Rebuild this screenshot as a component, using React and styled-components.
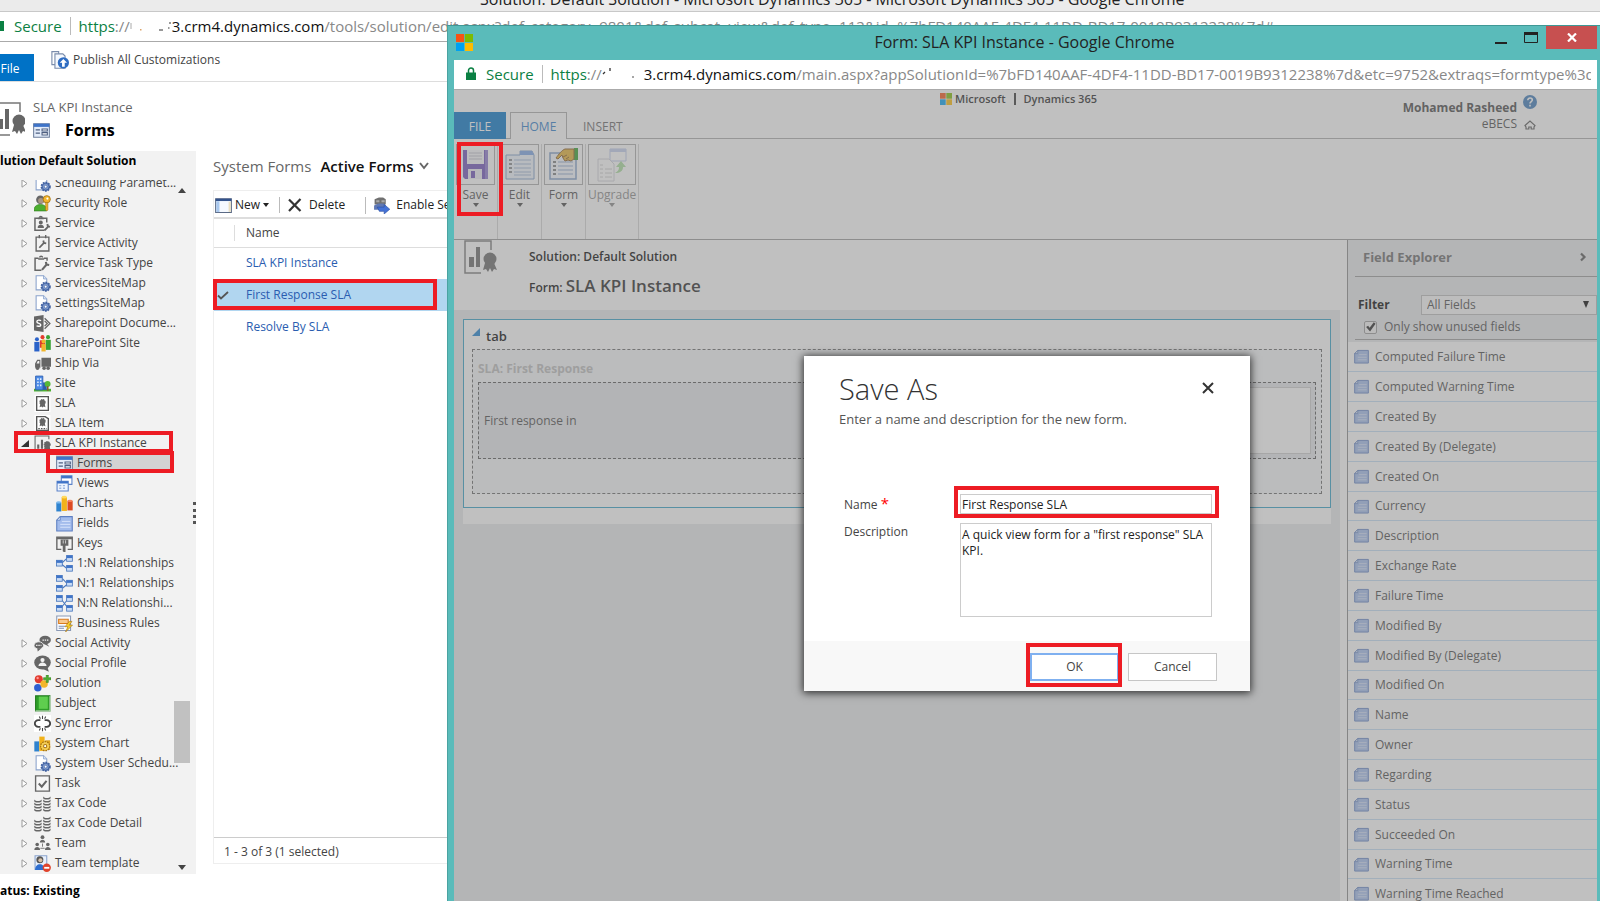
import React, { useState } from "react";
import styled, { createGlobalStyle, css } from "styled-components";

const TREE = [
  { label: "Scheduling Paramet...", icon: "sitemap" },
  { label: "Security Role", icon: "role" },
  { label: "Service", icon: "service" },
  { label: "Service Activity", icon: "activity" },
  { label: "Service Task Type", icon: "taskType" },
  { label: "ServicesSiteMap", icon: "sitemap" },
  { label: "SettingsSiteMap", icon: "sitemap" },
  { label: "Sharepoint Docume...", icon: "sharepoint" },
  { label: "SharePoint Site", icon: "people" },
  { label: "Ship Via", icon: "ship" },
  { label: "Site", icon: "site" },
  { label: "SLA", icon: "sla" },
  { label: "SLA Item", icon: "slaItem" },
  { label: "SLA KPI Instance", icon: "kpi", open: true, marked: true },
  { label: "Forms", icon: "form", child: true, selected: true, marked: true },
  { label: "Views", icon: "views", child: true },
  { label: "Charts", icon: "charts", child: true },
  { label: "Fields", icon: "field", child: true },
  { label: "Keys", icon: "keys", child: true },
  { label: "1:N Relationships", icon: "oneToN", child: true },
  { label: "N:1 Relationships", icon: "nToOne", child: true },
  { label: "N:N Relationshi...", icon: "nToN", child: true },
  { label: "Business Rules", icon: "rules", child: true },
  { label: "Social Activity", icon: "social" },
  { label: "Social Profile", icon: "profile" },
  { label: "Solution", icon: "solution" },
  { label: "Subject", icon: "subject" },
  { label: "Sync Error", icon: "sync" },
  { label: "System Chart", icon: "sysChart" },
  { label: "System User Schedu...", icon: "sitemap" },
  { label: "Task", icon: "task" },
  { label: "Tax Code", icon: "tax" },
  { label: "Tax Code Detail", icon: "tax" },
  { label: "Team", icon: "team" },
  { label: "Team template", icon: "template" },
];

const FIELDS = [
  "Computed Failure Time",
  "Computed Warning Time",
  "Created By",
  "Created By (Delegate)",
  "Created On",
  "Currency",
  "Description",
  "Exchange Rate",
  "Failure Time",
  "Modified By",
  "Modified By (Delegate)",
  "Modified On",
  "Name",
  "Owner",
  "Regarding",
  "Status",
  "Succeeded On",
  "Warning Time",
  "Warning Time Reached",
];

const FORMS = ["SLA KPI Instance", "First Response SLA", "Resolve By SLA"];

const g = "#666";

const gear = (
  <g>
    <circle cx="11" cy="11" r="4" fill="#6d8cc4" stroke="#3f5f9e" strokeWidth="1.6" strokeDasharray="1.6 1" />
    <circle cx="11" cy="11" r="3.2" fill="#7f9ccf" stroke="#3f5f9e" strokeWidth=".8" />
    <circle cx="11" cy="11" r="1.3" fill="#fff" stroke="#3f5f9e" strokeWidth=".6" />
  </g>
);

const node = (x, y) => (
  <g key={`${x}-${y}`}>
    <rect x={x} y={y} width="5.4" height="5.4" fill="#c9dcf6" stroke="#4a78bd" strokeWidth=".8" />
    <rect x={x} y={y} width="5.4" height="2.4" fill="#3f74c8" />
  </g>
);

const coins = (x, y, n) =>
  Array.from({ length: n }, (_, i) => (
    <path key={`${x}-${i}`} d={`M${x} ${y + i * 2.8}c0 2.2 7 2.2 7 0v1.6c0 2-7 2-7 0z`} fill={g} />
  ));

const ribbonBadge = (x, y, r) => (
  <g fill={g}>
    <circle cx={x} cy={y} r={r} />
    <circle cx={x} cy={y} r={r} fill="none" stroke={g} strokeWidth="1" strokeDasharray="1.2 .8" />
    <path d={`M${x - r * 0.8} ${y + r * 0.4}l${-r * 0.3} ${r * 1.5}l${r * 0.7} ${-r * 0.3}l${r * 0.4} ${r * 0.4}l${r * 0.4} ${-r * 0.4}l${r * 0.7} ${r * 0.3}l${-r * 0.3} ${-r * 1.5}z`} />
  </g>
);

const glyphs = {
  sitemap: (
    <>
      <path d="M2 .7h7l3 3V14H2z" fill="#fff" stroke="#8aa3cc" />
      <path d="M9 .7v3h3" fill="#dce7f7" stroke="#8aa3cc" strokeWidth=".8" />
      {gear}
    </>
  ),
  role: (
    <>
      <circle cx="6" cy="4.5" r="4" fill="#666" />
      <circle cx="6.5" cy="5.5" r="2.6" fill="#a89684" />
      <path d="M0 15c0-4 2-6 6-6s6 2 6 6z" fill="#4caf2f" stroke="#2f7d1c" strokeWidth=".6" />
      <circle cx="12" cy="4" r="3.4" fill="#f2b62c" stroke="#a87412" strokeWidth=".8" />
      <circle cx="12.6" cy="3.4" r="1" fill="#fff" />
      <path d="M11 7h2v7l-1 1-1-1z" fill="#f2b62c" stroke="#a87412" strokeWidth=".6" />
    </>
  ),
  service: (
    <g fill="none" stroke={g} strokeWidth="1.4">
      <path d="M10 14.300H.9V3H12v4" />
      <path d="M3.6 3.400h5.600M5 2.400a1.500 1.500 0 0 1 2.800 0" />
      <circle cx="6.400" cy="7" r="1.200" fill={g} />
      <path d="M4.200 11.500c0-2.200 4.400-2.200 4.400 0z" fill={g} />
      <path d="M10 14.500l3.300-3.600M12.600 8.500l.4 2 2 .6" strokeWidth="1.800" />
    </g>
  ),
  activity: (
    <g fill="none" stroke={g} strokeWidth="1.300">
      <path d="M2 2h12v13H2zM5 0v3M11 0v3" />
      <path d="M5 12l4.600-4.800M8.800 5.200l.4 2.300 2.300.4" strokeWidth="1.700" />
    </g>
  ),
  taskType: (
    <g fill="none" stroke={g} strokeWidth="1.400">
      <path d="M7 14.300H1V3h3.200M9.300 3h3v2.500M4 3.700h5.600M5.200 2.300a1.600 1.600 0 0 1 3 0" />
      <path d="M7.500 14l4.400-5M11.200 6.500l.5 2.500 2.600.4" strokeWidth="2" />
    </g>
  ),
  sharepoint: (
    <>
      <path d="M0 1.500L9 0v16L0 14.500z" fill={g} />
      <path d="M6.600 5.400c-1-1-3.900-.8-3.900.9 0 2 3.700 1.300 3.700 3 0 1.500-2.700 1.700-4 .8" fill="none" stroke="#fff" strokeWidth="1.300" />
      <path d="M10 3l5 5-5 5M10 5.500L12.500 8 10 10.500" fill="none" stroke={g} strokeWidth="1.200" />
    </>
  ),
  people: (
    <>
      <circle cx="8" cy="2" r="1.900" fill="#e23b2e" />
      <path d="M5.500 5h5v7h-5z" fill="#e23b2e" />
      <circle cx="13.200" cy="2" r="1.900" fill="#3aa335" />
      <path d="M11 4.500h4.800V14H11z" fill="#3aa335" />
      <circle cx="2.800" cy="4" r="1.900" fill="#2a62c9" />
      <path d="M.3 6.500h4.800V15.500H.3z" fill="#2a62c9" />
      <circle cx="9" cy="6" r="1.900" fill="#f2b62c" />
      <path d="M7 8.500h4V15.500H7z" fill="#f2b62c" />
    </>
  ),
  ship: (
    <g fill={g}>
      <path d="M7 2.500h9V11H7zM6 4.500H3L1 8v4h5z" />
      <path d="M3.600 5.600H5V8H2.400z" fill="#f2f2f2" />
      <circle cx="3.300" cy="12.400" r="1.700" />
      <circle cx="9.500" cy="12.400" r="1.700" />
      <circle cx="13.300" cy="12.400" r="1.700" />
    </g>
  ),
  site: (
    <>
      <path d="M0 13h16v2.500H0z" fill="#4caf2f" />
      <path d="M1.500 1h6.800v13H1.500z" fill="#4d8be6" stroke="#2a5db0" strokeWidth=".8" />
      <path d="M3 3h1.400v1.600H3zm2.600 0H7v1.600H5.600zM3 6h1.400v1.600H3zm2.600 0H7v1.600H5.600zM3 9h1.400v1.600H3zm2.600 0H7v1.600H5.600z" fill="#e4f0ff" />
      <path d="M8.500 7H12v7H8.500z" fill="#2a5db0" />
      <circle cx="12.800" cy="8.500" r="2.800" fill="#57b838" />
      <path d="M12.200 10.500h1.500V15h-1.500z" fill="#8a5a2b" />
    </>
  ),
  sla: (
    <>
      <path d="M.5 0h15v16H.5z" fill="#fff" />
      <path d="M2.500 1.500h11v13h-11z" fill="#fff" stroke="#555" strokeWidth="1.300" />
      {ribbonBadge(8, 6.800, 2.500)}
    </>
  ),
  slaItem: (
    <>
      <path d="M.5 0h15v16H.5z" fill="#fff" />
      <path d="M2.500 1.500h8l3 2v11h-11z" fill="#fff" stroke="#555" strokeWidth="1.300" />
      {ribbonBadge(8, 5.800, 2.500)}
      <path d="M4 12.800h8" stroke="#555" strokeDasharray="1.500 1" />
    </>
  ),
  kpi: (
    <>
      <path d="M14 4V1H1v14h8" fill="none" stroke={g} />
      <path d="M3 9h2v4H3zM6.500 4.500h2V13h-2z" fill={g} />
      {ribbonBadge(12.400, 9, 2.800)}
    </>
  ),
  form: (
    <>
      <path d="M.6 1.600h14.800v12.800H.6z" fill="#e3ecfa" stroke="#6f7f9c" />
      <path d="M.6 1.600h14.800v3H.6z" fill="#3f74c8" />
      <path d="M2.500 7.500h4M2.500 10.500h4" stroke="#4d5e80" strokeWidth="1.200" />
      <path d="M8.500 6.500h5v2h-5zM8.500 10h5v2.200h-5z" fill="#fff" stroke="#4d5e80" />
    </>
  ),
  views: (
    <>
      <path d="M5 .8h10v8H5z" fill="#fff" stroke="#5a82c9" />
      <path d="M5 .8h10v2.400H5z" fill="#3f74c8" />
      <path d="M1 5.800h10.500V15H1z" fill="#eff5fe" stroke="#5a82c9" />
      <path d="M1 5.800h10.500v2.200H1z" fill="#3f74c8" />
      <path d="M3 10h2M6.500 10h2M3 12.500h2M6.500 12.500h2" stroke="#9db7e0" strokeWidth="1.300" />
    </>
  ),
  charts: (
    <>
      <path d="M.3 7h4.700v8.500H.3z" fill="#2f83cf" />
      <ellipse cx="2.600" cy="7" rx="2.300" ry="1.100" fill="#7bb8ee" />
      <path d="M5.300 2h5v13h-5z" fill="#f2b21a" />
      <ellipse cx="7.800" cy="2" rx="2.500" ry="1.200" fill="#ffd95e" />
      <path d="M10.800 5.500h4.900V14.500h-4.900z" fill="#dd4a22" />
      <ellipse cx="13.200" cy="5.500" rx="2.400" ry="1.100" fill="#f5835e" />
    </>
  ),
  field: (
    <>
      <path d="M4 1.500h11.300V15H.7V4.900z" fill="#a3bcec" stroke="#5d7fc2" />
      <path d="M.7 4.900L4 1.500v3.400z" fill="#e4edfc" stroke="#5d7fc2" strokeWidth=".8" />
      <path d="M5.500 6h8M4 8.800h9.500M4 11.500h9.500" stroke="#d9e5fb" strokeWidth=".9" />
    </>
  ),
  keys: (
    <g fill="none" stroke={g} strokeWidth="1.300">
      <path d="M5 13.500H.8V2h14.500v11.500H11" />
      <path d="M.8 3h14.500" strokeWidth="2" />
      <path d="M5 5h6v4.500H5zM7 9.500V15l1.300.8V9.500" fill={g} />
      <path d="M6.800 5v3M9 5v3" stroke="#ddd" strokeWidth=".8" />
    </g>
  ),
  oneToN: (
    <>
      <path d="M5 8l5-4.500M5 8.500l5 4" stroke="#4a78bd" fill="none" />
      {node(0.500, 5)}
      {node(10, 0.500)}
      {node(10, 9.800)}
    </>
  ),
  nToOne: (
    <>
      <path d="M6 3.500l5 5M6 12.500l5-4" stroke="#4a78bd" fill="none" />
      {node(0.500, 0.500)}
      {node(0.500, 9.800)}
      {node(10, 5)}
    </>
  ),
  nToN: (
    <>
      <path d="M5 4l6 8M11 4l-6 8" stroke="#4a78bd" fill="none" />
      {node(0.500, 0.500)}
      {node(10, 0.500)}
      {node(0.500, 9.800)}
      {node(10, 9.800)}
    </>
  ),
  rules: (
    <>
      <path d="M.7 1h13v13.500H.7z" fill="#fafcff" stroke="#8a99b5" />
      <path d="M2.500 4h9v4h-9z" fill="#f7c98f" stroke="#d97a1c" />
      <path d="M2.500 10.500h6M2.500 12.500h5" stroke="#7f8fb0" />
      <path d="M12.500 6l-4 5h2.700L9 16l6.500-6.500h-3L15 6z" fill="#f7cf2c" stroke="#a87412" strokeWidth=".6" />
    </>
  ),
  social: (
    <g fill={g}>
      <ellipse cx="10.500" cy="4.800" rx="5.400" ry="4" />
      <path d="M12 8l2.500 3-5-2.500z" />
      <ellipse cx="4.500" cy="9.800" rx="4.500" ry="3.400" stroke="#f2f2f2" strokeWidth=".8" />
      <path d="M3 12.500l.5 3 3.500-3z" />
      <path d="M8 4.800h5.500M2 9.800h5" stroke="#f2f2f2" strokeWidth="1.300" strokeDasharray="1.300 .8" />
    </g>
  ),
  profile: (
    <g fill={g}>
      <ellipse cx="8" cy="7" rx="7.800" ry="6.600" />
      <path d="M8 13l6 2.800-1.500-5z" />
      <circle cx="8" cy="4.800" r="2" fill="#f2f2f2" />
      <path d="M4.200 10.400c0-4.400 7.600-4.400 7.600 0z" fill="#f2f2f2" />
    </g>
  ),
  solution: (
    <>
      <circle cx="4.500" cy="4" r="3.800" fill="#e23b2e" />
      <circle cx="3.600" cy="12" r="3.500" fill="#2f5fd0" />
      <circle cx="9.500" cy="8.500" r="3.500" fill="#f2b62c" />
      <circle cx="3.400" cy="2.800" r="1.100" fill="#f99" />
      <path d="M11.500 0h2v2.500H16v2h-2.500V7h-2V4.500H9v-2h2.500z" fill="#4caf2f" stroke="#2f7d1c" strokeWidth=".5" />
    </>
  ),
  subject: (
    <>
      <path d="M1.500.8H15V15H1.500z" fill="#2f9e28" stroke="#1f7a1b" />
      <path d="M4.500 1.500h8.500v11.500H4.500z" fill="#5fce4e" />
      <path d="M1.500 15h13.500M15 1v14" stroke="#dfeedd" strokeWidth=".8" />
    </>
  ),
  sync: (
    <>
      <path d="M0 0h16v16H0z" fill="#fff" />
      <g fill="none" stroke="#444" strokeWidth="1.700">
        <path d="M6 4.800H4a3.200 3.200 0 0 0 0 6.400h2M10 4.800h2a3.200 3.200 0 0 1 0 6.400h-2" />
        <path d="M8 .8v3M5 1.500l1 2M11 1.500l-1 2M8 12.200v3M5 14.500l1-2M11 14.500l-1-2" strokeWidth="1" />
      </g>
    </>
  ),
  sysChart: (
    <>
      <path d="M.3 6h4.700v9.500H.3z" fill="#2f83cf" />
      <path d="M5 1.500h5V15H5z" fill="#f2b21a" />
      <path d="M10.500 5h4.700v9h-4.700z" fill="#e0a21a" />
      <circle cx="10.500" cy="10.500" r="4.300" fill="#f6cf55" stroke="#a87412" strokeWidth="1.200" strokeDasharray="1.600 .8" />
      <circle cx="10.500" cy="10.500" r="1.500" fill="#fff" stroke="#a87412" />
    </>
  ),
  task: (
    <>
      <path d="M1.500.8h13v14.400h-13z" fill="#f6f6f6" stroke={g} strokeWidth="1.300" />
      <path d="M4.500 8l2.800 3 4.500-5.500" fill="none" stroke={g} strokeWidth="1.900" />
    </>
  ),
  tax: (
    <>
      {coins(0.200, 4, 4)}
      {coins(8.600, 1.200, 5)}
    </>
  ),
  team: (
    <g fill={g}>
      <circle cx="8" cy="2" r="1.800" />
      <path d="M5.500 7c0-3.500 5-3.500 5 0z" />
      <circle cx="3" cy="9" r="1.700" />
      <path d="M.3 14c0-3.500 5.400-3.500 5.400 0z" />
      <circle cx="13" cy="9" r="1.700" />
      <path d="M10.300 14c0-3.500 5.400-3.500 5.400 0z" />
      <path d="M8 8v3M6 12.500h4" stroke={g} strokeWidth=".8" />
    </g>
  ),
  template: (
    <>
      <path d="M1 .7h11v13H1z" fill="#e8f0fc" stroke="#8aa3cc" />
      <circle cx="5.500" cy="4.500" r="3.300" fill="#555" />
      <circle cx="6" cy="5" r="1.900" fill="#d8c0a8" />
      <path d="M1 14c0-7 9-7 9 0z" fill="#2f6fd0" />
      <circle cx="12" cy="12" r="3.900" fill="#e0432c" />
      <path d="M9.600 11.200h4.800v1.700H9.600z" fill="#fff" />
    </>
  ),
  publish: (
    <>
      <path d="M.8.600h6v11.500h-6z" fill="#fff" stroke="#7a8cab" />
      <path d="M3.500 2.500h7l2 2v10.800h-9z" fill="#f4f8fe" stroke="#7a8cab" />
      <circle cx="11" cy="10.500" r="5" fill="#2f6dc2" />
      <path d="M11 7l3.200 3.400h-2V14H9.800v-3.600h-2z" fill="#fff" />
    </>
  ),
  newItem: (
    <>
      <path d="M.6 1.600h14.800v13H.6z" fill="#f5f9ff" stroke="#5b6a85" />
      <path d="M.6 1.600h14.800v2.200H.6z" fill="#33538c" />
      <path d="M1.200 4h3v10.200h-3z" fill="#a9c8ee" />
      <path d="M12.800 4.500h2v9.500h-2z" fill="#eadfc0" />
    </>
  ),
  remove: <path d="M2 2.500l11.500 11.500M13.500 2L2 14" stroke="#333" strokeWidth="2.200" fill="none" />,
  enable: (
    <>
      <path d="M1.500 2l4-1.500h4l2.500 1.500v5H1.500z" fill="#707070" />
      <path d="M3 3h3v2H3zM8 3h3v2H8z" fill="#aaa" />
      <path d="M1 12V8l4-2h5l2 2v4z" fill="#5f78b4" />
      <path d="M4 9.500h6.500V7l5.300 4.500-5.300 4.500v-2.500H6z" fill="#4472d6" stroke="#2b4fa3" strokeWidth=".6" />
    </>
  ),
};

const Icon = ({ name, size = 17 }) => (
  <svg width={size} height={size} viewBox="0 0 16 16" aria-hidden="true">
    {glyphs[name]}
  </svg>
);

const WindowsLogo = ({ size }) => (
  <svg width={size} height={size} viewBox="0 0 20 20" aria-hidden="true">
    <path d="M0 0h9.500v9.500H0z" fill="#f65314" />
    <path d="M10.500 0H20v9.500h-9.500z" fill="#7cbb00" />
    <path d="M0 10.500h9.500V20H0z" fill="#00a1f1" />
    <path d="M10.500 10.500H20V20h-9.500z" fill="#ffbb00" />
  </svg>
);

const Lock = () => (
  <svg width="10" height="13" viewBox="0 0 10 13" aria-hidden="true">
    <path d="M2.500 6V3.500a2.500 2.500 0 0 1 5 0V6" fill="none" stroke="#0b8043" strokeWidth="1.500" />
    <path d="M0 5.500h10V13H0z" fill="#0b8043" />
  </svg>
);

const Caret = () => (
  <svg width="6" height="4" viewBox="0 0 6 4" aria-hidden="true">
    <path d="M0 0h6L3 4z" fill="currentColor" />
  </svg>
);

const Expander = ({ open }) => (
  <svg width="8" height="9" viewBox="0 0 8 9" aria-hidden="true">
    {open ? <path d="M8 1v7H0z" fill="#333" /> : <path d="M1 .800L6 4.500 1 8.200z" fill="#fff" stroke="#999" />}
  </svg>
);

const ribbonArt = {
  Save: (
    <>
      <path d="M3 3h25v29H5l-2-2z" fill="#6c4fb8" />
      <path d="M7 3h17v14H7z" fill="#f6f6fa" />
      <path d="M9 6h13M9 9h13M9 12h13" stroke="#c0c0cc" />
      <path d="M8 22h14v10H8z" fill="#ececf4" />
      <path d="M11 24h4v7h-4z" fill="#6c4fb8" />
      <path d="M25 3h3v29h-3z" fill="#8b76cc" />
    </>
  ),
  Edit: (
    <>
      <path d="M2 8h14V4h12l2 4v24H2z" fill="#eef4fc" stroke="#7c9cc8" />
      <path d="M16 4h12l2 4H16z" fill="#7aa5e6" />
      <path d="M5 13h3M5 17h3M5 21h3M5 25h3" stroke="#666" strokeWidth="1.500" />
      <path d="M10 13h17M10 17h17M10 21h17M10 25h17M10 28h17" stroke="#9fb4d4" />
    </>
  ),
  Form: (
    <>
      <path d="M2 6h26v26H2z" fill="#f4f8fe" stroke="#7c9cc8" strokeWidth="1.500" />
      <path d="M5 15h3M5 19h3M5 23h3M5 27h3" stroke="#555" strokeWidth="1.500" />
      <path d="M10 15h15M10 19h15M10 23h15M10 27h15" stroke="#8fa8cf" />
      <path d="M26 1h4v12h-4z" fill="#2f9e28" />
      <path d="M26 2h-9c-3 1-6 5-9 9l2 1 4-4 1 3 2 3 3-1 3 1 3-2z" fill="#e5b030" stroke="#8a5a1c" />
      <path d="M15 10l4-2M18 12l3-2" stroke="#8a5a1c" />
    </>
  ),
  Upgrade: (
    <>
      <path d="M14 2h16v12H14z" fill="#fff" stroke="#b9c6e8" />
      <path d="M14 2h16v3H14z" fill="#c3cfee" />
      <path d="M2 12h11l5 5v17H2z" fill="#fff" stroke="#d0d0d8" />
      <path d="M4 18h3M4 22h3M4 26h3M4 30h3M9 22h7M9 26h7M9 30h7" stroke="#ccc" />
      <path d="M25 14l5 6h-3c0 4-3 6-8 6 3-2 4-3 4-6h-3z" fill="#a8dc9c" />
    </>
  ),
};

const BackTitle =
  "Solution: Default Solution - Microsoft Dynamics 365 - Microsoft Dynamics 365 - Google Chrome";

const App = () => {
  const [name, setName] = useState("First Response SLA");
  const [description, setDescription] = useState('A quick view form for a "first response" SLA KPI.');
  const [unused, setUnused] = useState(true);

  return (
    <Desktop>
      <GlobalStyle />
      <BackWindow>
        <BackTitleBar>{BackTitle}</BackTitleBar>
        <BackAddress>
          <BackLock />
          <Secure>Secure</Secure>
          <Divider />
          <Url>
            <Scheme>https</Scheme>://
            <Redacted $width={42}>
              <svg width="42" height="12" viewBox="0 0 42 12" aria-hidden="true">
                <path d="M1 3v6" stroke="#aaa" />
                <path d="M10 9h1.500v1.500H10z" fill="#dba36a" />
                <path d="M29 10h4M39 3h2M38 8h1.500" stroke="#333" />
              </svg>
            </Redacted>
            <Domain>3.crm4.dynamics.com</Domain>
            /tools/solution/edit.aspx?def_category=9801&amp;def_subcat=view&amp;def_type=112&amp;id=%7bFD140AAF-4DF4-11DD-BD17-0019B9312238%7d#
          </Url>
        </BackAddress>
        <BackRibbon>
          <BackFile type="button">File</BackFile>
          <PublishButton type="button">
            <Icon name="publish" size={18} />
            Publish All Customizations
          </PublishButton>
        </BackRibbon>
        <EntityHeader>
          <EntityArt>
            <svg width="32" height="34" viewBox="0 0 32 34" aria-hidden="true">
              <KpiArt />
            </svg>
          </EntityArt>
          <EntityText>
            <EntityName>SLA KPI Instance</EntityName>
            <EntityTitle>
              <Icon name="form" />
              Forms
            </EntityTitle>
          </EntityText>
        </EntityHeader>
        <BackBody>
          <Sidebar>
            <SidebarTitle>lution Default Solution</SidebarTitle>
            <TreeArea>
              <Tree>
                {TREE.map((item) => (
                  <TreeRow key={item.label} $child={item.child}>
                    {!item.child && <Expander open={item.open} />}
                    <TreeLink href="#" $selected={item.selected}>
                      <Icon name={item.icon} />
                      {item.label}
                    </TreeLink>
                    {item.marked && <TreeMark $child={item.child} />}
                  </TreeRow>
                ))}
              </Tree>
              <Scrollbar>
                <svg width="8" height="5" viewBox="0 0 8 5" aria-hidden="true">
                  <path d="M0 5h8L4 0z" fill="#444" />
                </svg>
                <Thumb />
                <svg width="8" height="5" viewBox="0 0 8 5" aria-hidden="true">
                  <path d="M0 0h8L4 5z" fill="#444" />
                </svg>
              </Scrollbar>
              <Splitter />
            </TreeArea>
          </Sidebar>
          <GridPane>
            <GridHeading>
              System Forms
              <ActiveView type="button">
                Active Forms
                <svg width="10" height="8" viewBox="0 0 10 8" aria-hidden="true">
                  <path d="M1 1l4 5 4-5" fill="none" stroke="#666" strokeWidth="2" />
                </svg>
              </ActiveView>
            </GridHeading>
            <GridBox>
              <GridToolbar>
                <ToolButton type="button">
                  <Icon name="newItem" />
                  New
                  <Caret />
                </ToolButton>
                <ToolButton type="button" $wide>
                  <Icon name="remove" size={16} />
                  Delete
                </ToolButton>
                <ToolButton type="button">
                  <Icon name="enable" />
                  <EnableText>Enable Se</EnableText>
                </ToolButton>
              </GridToolbar>
              <FormsTable>
                <thead>
                  <tr>
                    <th>
                      <HeadTick />
                    </th>
                    <th>Name</th>
                  </tr>
                </thead>
                <tbody>
                  {FORMS.map((form, i) => (
                    <FormRow key={form} $selected={i === 1}>
                      <td>
                        {i === 1 && (
                          <>
                            <svg width="12" height="9" viewBox="0 0 12 9" aria-hidden="true">
                              <path d="M1 4.500l3 3L11 1" fill="none" stroke="#555" strokeWidth="1.800" />
                            </svg>
                            <RowMark />
                          </>
                        )}
                      </td>
                      <td>
                        <a href="#">{form}</a>
                      </td>
                    </FormRow>
                  ))}
                </tbody>
              </FormsTable>
              <GridFooter>1 - 3 of 3 (1 selected)</GridFooter>
            </GridBox>
          </GridPane>
        </BackBody>
        <StatusBar>atus: Existing</StatusBar>
      </BackWindow>

      <FrontWindow>
        <TitleBar>
          <WindowsLogo size={17} />
          <TitleText>Form: SLA KPI Instance - Google Chrome</TitleText>
          <WindowControls>
            <WindowButton type="button" aria-label="Minimize">
              <svg width="14" height="14" viewBox="0 0 14 14" aria-hidden="true">
                <path d="M1 12h12" stroke="#222" strokeWidth="2" />
              </svg>
            </WindowButton>
            <WindowButton type="button" aria-label="Maximize">
              <svg width="14" height="14" viewBox="0 0 14 14" aria-hidden="true">
                <path d="M.5 2.500h13v9H.5z" fill="none" stroke="#222" />
                <path d="M0 1h14v3H0z" fill="#222" />
              </svg>
            </WindowButton>
            <WindowButton type="button" aria-label="Close" $close>
              <svg width="10" height="9" viewBox="0 0 10 9" aria-hidden="true">
                <path d="M1 .5l8 8M9 .5l-8 8" stroke="#fff" strokeWidth="2.200" />
              </svg>
            </WindowButton>
          </WindowControls>
        </TitleBar>
        <FrontAddress>
          <Lock />
          <Secure>Secure</Secure>
          <Divider />
          <Url>
            <Scheme>https</Scheme>://
            <Redacted $width={42}>
              <svg width="42" height="14" viewBox="0 0 42 14" aria-hidden="true">
                <path d="M1 7l2-2M8 1v3" stroke="#333" strokeWidth="1.300" />
                <path d="M30 10h2" stroke="#888" strokeWidth="1.500" />
              </svg>
            </Redacted>
            <Domain>3.crm4.dynamics.com</Domain>
            /main.aspx?appSolutionId=%7bFD140AAF-4DF4-11DD-BD17-0019B9312238%7d&amp;etc=9752&amp;extraqs=formtype%3d
          </Url>
        </FrontAddress>
        <Page>
          <BrandRow>
            <Brand>
              <WindowsLogo size={12} />
              Microsoft
              <BrandBar />
              <span>Dynamics 365</span>
            </Brand>
            <User>
              <UserNames>
                <strong>Mohamed Rasheed</strong>
                <span>eBECS</span>
              </UserNames>
              <UserIcons>
                <svg width="14" height="14" viewBox="0 0 14 14" aria-hidden="true">
                  <circle cx="7" cy="7" r="7" fill="#3b79b8" />
                  <path d="M4.800 5.200c0-3 4.500-2.700 4.500-.2C9.300 6.600 7 6.600 7 8.600M7 9.800v1.700" fill="none" stroke="#fff" strokeWidth="1.600" />
                </svg>
                <svg width="12" height="10" viewBox="0 0 12 10" aria-hidden="true">
                  <path d="M1 5.500l5-4.500 5 4.500-1 1.500v2H7.200V7H4.800v2H2V7z" fill="none" stroke="#555" strokeWidth="1.200" />
                </svg>
              </UserIcons>
            </User>
          </BrandRow>
          <Tabs>
            <RibbonTab type="button" $kind="file">FILE</RibbonTab>
            <RibbonTab type="button" $kind="active">HOME</RibbonTab>
            <RibbonTab type="button">INSERT</RibbonTab>
          </Tabs>
          <Ribbon>
            {["Save", "Edit", "Form", "Upgrade"].map((label) => (
              <RibbonGroup key={label}>
                <RibbonButton type="button" disabled={label === "Upgrade"}>
                  <RibbonPicture>
                    <svg width="34" height="36" viewBox="0 0 32 36" aria-hidden="true">
                      {ribbonArt[label]}
                    </svg>
                  </RibbonPicture>
                  {label}
                  <Caret />
                </RibbonButton>
                {label === "Save" && <SaveMark />}
              </RibbonGroup>
            ))}
          </Ribbon>
          <Workspace>
            <Canvas>
              <CanvasHeader>
                <svg width="34" height="34" viewBox="0 0 34 34" aria-hidden="true">
                  <KpiArt />
                </svg>
                <CanvasTitles>
                  <p>Solution: Default Solution</p>
                  <p>
                    Form: <FormTitle>SLA KPI Instance</FormTitle>
                  </p>
                </CanvasTitles>
              </CanvasHeader>
              <Designer>
                <FormBody>
                  <TabBox>
                    <TabTitle>
                      <svg width="8" height="8" viewBox="0 0 8 8" aria-hidden="true">
                        <path d="M8 0v8H0z" fill="#1a80d0" />
                      </svg>
                      tab
                    </TabTitle>
                    <Section>
                      <SectionTitle>SLA: First Response</SectionTitle>
                      <SectionCell>
                        First response in
                        <CellValue />
                      </SectionCell>
                    </Section>
                  </TabBox>
                </FormBody>
              </Designer>
            </Canvas>
            <Explorer>
              <ExplorerTop>
                <ExplorerTitle>
                  Field Explorer
                  <svg width="8" height="10" viewBox="0 0 8 10" aria-hidden="true">
                    <path d="M2 1.500L5.500 5 2 8.500" fill="none" stroke="#555" strokeWidth="2.200" />
                  </svg>
                </ExplorerTitle>
                <FilterRow>
                  <label htmlFor="filter">Filter</label>
                  <SelectWrap>
                    <FilterSelect id="filter">
                      <option>All Fields</option>
                    </FilterSelect>
                    <svg width="6" height="7" viewBox="0 0 6 7" aria-hidden="true">
                      <path d="M0 0h6L3 7z" fill="#000" />
                    </svg>
                  </SelectWrap>
                </FilterRow>
                <UnusedRow>
                  <input type="checkbox" checked={unused} onChange={(e) => setUnused(e.target.checked)} />
                  Only show unused fields
                </UnusedRow>
              </ExplorerTop>
              <FieldList>
                {FIELDS.map((field) => (
                  <li key={field}>
                    <Icon name="field" size={15} />
                    {field}
                  </li>
                ))}
              </FieldList>
            </Explorer>
          </Workspace>
          <Overlay>
            <Dialog role="dialog" aria-labelledby="save-as">
              <DialogBody>
                <DialogHead>
                  <h1 id="save-as">Save As</h1>
                  <CloseButton type="button" aria-label="Close dialog">
                    <svg width="12" height="12" viewBox="0 0 12 12" aria-hidden="true">
                      <path d="M1 1l10 10M11 1L1 11" stroke="#333" strokeWidth="2" />
                    </svg>
                  </CloseButton>
                </DialogHead>
                <DialogHint>Enter a name and description for the new form.</DialogHint>
                <DialogFields>
                  <FieldLabel htmlFor="form-name">
                    Name <Required>*</Required>
                  </FieldLabel>
                  <NameWrap>
                    <NameInput id="form-name" value={name} onChange={(e) => setName(e.target.value)} />
                    <NameMark />
                  </NameWrap>
                  <FieldLabel htmlFor="form-description">Description</FieldLabel>
                  <DescriptionInput
                    id="form-description"
                    value={description}
                    onChange={(e) => setDescription(e.target.value)}
                  />
                </DialogFields>
              </DialogBody>
              <DialogFooter>
                <OkWrap>
                  <DialogButton type="button" $primary>OK</DialogButton>
                  <OkMark />
                </OkWrap>
                <DialogButton type="button">Cancel</DialogButton>
              </DialogFooter>
            </Dialog>
          </Overlay>
        </Page>
      </FrontWindow>
    </Desktop>
  );
};

const KpiArt = () => (
  <>
    <path d="M27 10V1H1v32h16" fill="none" stroke="#777" strokeWidth="1.500" />
    <path d="M5 17h5v10H5zM12 7h4v20h-4z" fill="#666" />
    <circle cx="26" cy="19" r="6.500" fill="#666" />
    <path d="M21 23l-2 7 3-1 2 3 2-4 2 4 2-3 3 1-3-7z" fill="#666" />
  </>
);

const GlobalStyle = createGlobalStyle`
  *, *::before, *::after {
    box-sizing: border-box;
  }

  body {
    margin: 0;
    overflow: hidden;
    font-family: "Open Sans", "Noto Sans", sans-serif;
    font-size: 12px;
    line-height: 16px;
    color: #444;
  }

  button, input, select, textarea {
    font: inherit;
    color: inherit;
    border-radius: 0;
  }

  button {
    padding: 0;
    border: 0;
    background: none;
  }

  a {
    color: inherit;
    text-decoration: none;
  }

  h1, h2, p, ul {
    margin: 0;
    padding: 0;
  }

  svg {
    flex: none;
    display: block;
  }
`;

const Desktop = styled.div`
  position: relative;
  height: 100vh;
  overflow: hidden;
  background: #fff;
`;

/* Red frame drawn over a control */
const mark = css`
  position: absolute;
  border: 4px solid #ed1c24;
  pointer-events: none;
`;

const BackWindow = styled.div`
  display: flex;
  flex-direction: column;
  height: 100%;
`;

const BackTitleBar = styled.div`
  display: flex;
  align-items: flex-end;
  flex: none;
  height: 12px;
  padding-left: 480px;
  overflow: hidden;
  white-space: nowrap;
  background: #ebebeb;
  border-bottom: 1px solid #c8c8c8;
  color: #222;
  font-size: 16px;
  line-height: 24px;
`;

const addressBar = css`
  display: flex;
  align-items: center;
  flex: none;
  height: 30px;
  padding-bottom: 2px;
  overflow: hidden;
  white-space: nowrap;
  background: #fff;
  border-bottom: 1px solid #aaa;
  font-size: 15px;
  line-height: 20px;
`;

const BackAddress = styled.div`
  ${addressBar}
`;

const BackLock = styled.span`
  width: 4px;
  height: 10px;
  background: #0b8043;
`;

const Secure = styled.span`
  margin-left: 10px;
  color: #0b8043;
`;

const Divider = styled.span`
  flex: none;
  width: 1px;
  height: 18px;
  margin: 0 8px;
  background: #bbb;
`;

const Url = styled.span`
  display: flex;
  align-items: center;
  flex: 1;
  min-width: 0;
  overflow: hidden;
  color: #888;
`;

const Scheme = styled.span`
  color: #0b8043;
`;

const Domain = styled.span`
  color: #111;
`;

const Redacted = styled.span`
  flex: none;
  width: ${({ $width }) => $width}px;
`;

const BackRibbon = styled.div`
  display: flex;
  align-items: flex-end;
  flex: none;
  height: 40px;
  border-bottom: 1px solid #ddd;
`;

const BackFile = styled.button`
  width: 34px;
  height: 27px;
  padding: 2px 14px 0 0;
  background: #0072c6;
  color: #fff;
`;

const PublishButton = styled.button`
  display: flex;
  align-items: center;
  gap: 4px;
  align-self: flex-start;
  margin: 9px 0 0 17px;
`;

const EntityHeader = styled.div`
  display: flex;
  flex: none;
  height: 69px;
  padding-top: 16px;
  gap: 8px;
`;

const EntityArt = styled.div`
  display: flex;
  justify-content: flex-end;
  width: 25px;
  padding-top: 4px;
  overflow: hidden;
`;

const EntityText = styled.div`
  display: flex;
  flex-direction: column;
`;

const EntityName = styled.span`
  color: #666;
  font-size: 13px;
  line-height: 18px;
`;

const EntityTitle = styled.h2`
  display: flex;
  align-items: center;
  gap: 15px;
  color: #000;
  font-size: 16px;
  font-weight: 700;
  line-height: 28px;
`;

const BackBody = styled.div`
  display: flex;
  flex: 1;
  min-height: 0;
`;

const Sidebar = styled.nav`
  display: flex;
  flex-direction: column;
  flex: none;
  width: 196px;
  background: #f2f2f2;
`;

const SidebarTitle = styled.div`
  padding-top: 2px;
  height: 29px;
  color: #000;
  font-weight: 700;
`;

const TreeArea = styled.div`
  position: relative;
  display: flex;
  flex: 1;
  min-height: 0;
  padding-bottom: 2px;
  overflow: hidden;
`;

const Tree = styled.ul`
  position: relative;
  z-index: 1;
  flex: 1;
  min-width: 0;
  list-style: none;
  margin-top: -7px;
`;

const TreeRow = styled.li`
  position: relative;
  display: flex;
  align-items: center;
  gap: 5px;
  height: 20px;
  padding-left: ${({ $child }) => ($child ? 56 : 21)}px;
  white-space: nowrap;
`;

const TreeLink = styled.a`
  display: flex;
  align-items: center;
  gap: 4px;
  ${({ $selected }) =>
    $selected &&
    css`
      width: 114px;
      background: #d3d3d3;
    `}
`;

const TreeMark = styled.span`
  ${mark}
  top: -2px;
  bottom: 0;
  left: ${({ $child }) => ($child ? 46 : 14)}px;
  width: ${({ $child }) => ($child ? 128 : 159)}px;
`;

const Scrollbar = styled.div`
  display: flex;
  flex-direction: column;
  align-items: center;
  flex: none;
  width: 16px;
  margin-right: 6px;
  padding: 8px 0 2px;
`;

const Thumb = styled.div`
  width: 16px;
  height: 62px;
  margin: auto 0 102px;
  background: #c1c1c1;
`;

const Splitter = styled.span`
  position: absolute;
  right: 0;
  top: 322px;
  height: 22px;
  border-right: 3px dotted #555;
`;

const GridPane = styled.main`
  display: flex;
  flex-direction: column;
  flex: 1;
  padding: 3px 0 10px 17px;
`;

const GridHeading = styled.div`
  display: flex;
  align-items: center;
  gap: 9px;
  height: 24px;
  margin-bottom: 12px;
  color: #666;
  font-size: 15px;
`;

const ActiveView = styled.button`
  display: flex;
  align-items: center;
  gap: 5px;
  color: #111;
  font-weight: 600;
`;

const GridBox = styled.div`
  display: flex;
  flex-direction: column;
  flex: 1;
  border: 1px solid #eee;
`;

const GridToolbar = styled.div`
  display: flex;
  align-items: center;
  height: 28px;
  padding-top: 2px;
  border-bottom: 2px solid #ddd;
`;

const ToolButton = styled.button`
  display: flex;
  align-items: center;
  gap: ${({ $wide }) => ($wide ? 6 : 3)}px;
  padding: 0 ${({ $wide }) => ($wide ? 20 : 10)}px 0 1px;
  color: #222;

  & + & {
    padding-left: 7px;
    border-left: 1px solid #bbb;
  }
`;

const EnableText = styled.span`
  padding-left: 3px;
`;

const HeadTick = styled.span`
  display: block;
  height: 16px;
  border-right: 1px solid #ddd;
`;

const FormsTable = styled.table`
  width: 100%;
  border-collapse: collapse;

  th {
    height: 28px;
    padding: 0 0 0 11px;
    border-bottom: 1px solid #ddd;
    font-weight: 400;
    text-align: left;
  }

  th:first-child {
    width: 21px;
    padding: 0;
  }

  tbody {
    color: #2a5db0;
  }

  td {
    height: 32px;
    padding: 0 0 0 11px;
  }

  td:first-child {
    padding: 0 0 0 3px;
  }
`;

const FormRow = styled.tr`
  position: relative;
  background: ${({ $selected }) => ($selected ? "#b1d6f0" : "transparent")};
`;

const RowMark = styled.span`
  ${mark}
  top: 0;
  bottom: 1px;
  left: -1px;
  width: 224px;
`;

const GridFooter = styled.div`
  margin-top: auto;
  padding: 6px 10px 3px;
  border-top: 1px solid #ccc;
`;

const StatusBar = styled.div`
  flex: none;
  height: 27px;
  padding-top: 9px;
  color: #000;
  font-weight: 700;
`;

const FrontWindow = styled.div`
  position: absolute;
  inset: 25px 0 0 447px;
  display: flex;
  flex-direction: column;
  padding: 0 3px 0 6px;
  background: #5abbba;
  border-top: 1px solid #3f9896;
  border-left: 1px solid #4aa3a1;
`;

const TitleBar = styled.div`
  display: flex;
  align-items: center;
  flex: none;
  height: 34px;
  padding: 0 0 2px 2px;
  color: #222;
  font-size: 16px;
`;

const TitleText = styled.span`
  flex: 1;
  padding-left: 90px;
  text-align: center;
`;

const WindowControls = styled.div`
  display: flex;
  align-self: flex-start;
`;

const WindowButton = styled.button`
  display: grid;
  place-items: center;
  width: 30px;
  height: 23px;
  ${({ $close }) =>
    $close &&
    css`
      width: 51px;
      background: #c75050;
    `}
`;

const FrontAddress = styled.div`
  ${addressBar}
  padding: 0 6px 2px 12px;
`;

const Page = styled.div`
  position: relative;
  display: flex;
  flex-direction: column;
  flex: 1;
  min-height: 0;
  background: #fff;
`;

const BrandRow = styled.header`
  display: grid;
  grid-template-columns: 1fr auto 1fr;
  height: 22px;
`;

const Brand = styled.div`
  grid-column: 2;
  display: flex;
  align-items: center;
  gap: 3px;
  height: 18px;
  margin-right: 14px;
  color: #222;
  font-size: 11px;
  font-weight: 600;
`;

const BrandBar = styled.span`
  width: 2px;
  height: 12px;
  margin: 0 5px;
  background: #333;
`;

const User = styled.div`
  display: flex;
  justify-content: flex-end;
  gap: 6px;
  padding: 5px 60px 0 0;
`;

const UserNames = styled.div`
  display: flex;
  flex-direction: column;
  align-items: flex-end;
  padding-top: 5px;
`;

const UserIcons = styled.div`
  display: flex;
  flex-direction: column;
  align-items: center;
  gap: 11px;
`;

const Tabs = styled.div`
  display: flex;
  flex: none;
  gap: 4px;
  height: 27px;
  border-bottom: 1px solid #ababab;
`;

const RibbonTab = styled.button`
  height: 27px;
  padding: 2px 12px 0;
  color: #666;
  ${({ $kind }) =>
    $kind === "file" &&
    css`
      width: 52px;
      background: #0072c6;
      color: #fff;
    `}
  ${({ $kind }) =>
    $kind === "active" &&
    css`
      width: 57px;
      padding: 2px 0 0;
      background: #fff;
      border: 1px solid #ababab;
      border-bottom: 0;
      color: #2a7ac9;
    `}
`;

const Ribbon = styled.div`
  display: flex;
  flex: none;
  height: 101px;
  padding-top: 5px;
  border-bottom: 1px solid #999;
`;

const RibbonGroup = styled.div`
  position: relative;
  padding: 0 2px;
  border-right: 1px solid #d4d4d4;
`;

const RibbonButton = styled.button`
  display: flex;
  flex-direction: column;
  align-items: center;
  min-width: 39px;

  &:disabled {
    color: #888;
  }
`;

const RibbonPicture = styled.span`
  display: grid;
  place-items: center;
  align-self: stretch;
  height: 41px;
  margin-bottom: 2px;
  border: 1px solid #aaa;
`;

const SaveMark = styled.span`
  ${mark}
  z-index: 2;
  top: -2px;
  left: 3px;
  width: 46px;
  height: 74px;
`;

const Workspace = styled.div`
  display: flex;
  flex: 1;
  min-height: 0;
`;

const Canvas = styled.div`
  display: flex;
  flex-direction: column;
  flex: 1;
  padding-right: 7px;
`;

const CanvasHeader = styled.div`
  display: flex;
  gap: 31px;
  height: 70px;
  padding-left: 10px;
`;

const CanvasTitles = styled.div`
  display: flex;
  flex-direction: column;
  gap: 8px;
  padding-top: 9px;
  color: #000;
  font-weight: 600;
`;

const FormTitle = styled.span`
  color: #222;
  font-size: 17px;
  line-height: 26px;
`;

const Designer = styled.div`
  flex: 1;
  padding: 9px;
  background: #e6e8eb;
`;

const FormBody = styled.div`
  padding-bottom: 16px;
  background: #fff;
`;

const TabBox = styled.div`
  padding: 0 8px 13px;
  border: 1px solid #2e9fc4;
`;

const TabTitle = styled.div`
  display: flex;
  gap: 6px;
  height: 29px;
  padding-top: 8px;
  color: #000;
  font-size: 13px;
  font-weight: 600;
`;

const Section = styled.div`
  padding: 0 5px 34px;
  background: #f4f6f8;
  border: 1px dashed #666;
`;

const SectionTitle = styled.div`
  padding: 11px 0 5px;
  color: #bbb;
  font-weight: 700;
`;

const SectionCell = styled.div`
  display: flex;
  align-items: center;
  justify-content: space-between;
  height: 77px;
  padding: 4px 4px 4px 5px;
  background: #e4e7ea;
  border: 1px dashed #555;
`;

const CellValue = styled.span`
  align-self: stretch;
  width: 60%;
  background: #fff;
  border: 1px solid #ccc;
`;

const Explorer = styled.aside`
  flex: none;
  width: 250px;
  border-left: 1px solid #888;
`;

const ExplorerTop = styled.div`
  height: 102px;
  padding-left: 7px;
  background: #e6e8eb;
`;

const ExplorerTitle = styled.h2`
  display: flex;
  align-items: center;
  justify-content: space-between;
  height: 37px;
  padding: 0 10px 2px 8px;
  border-bottom: 1px solid #999;
  color: #666;
  font-size: 13px;
  font-weight: 700;
`;

const FilterRow = styled.div`
  display: flex;
  align-items: center;
  justify-content: space-between;
  padding: 18px 0 0 3px;
  color: #000;
  font-weight: 700;
`;

const SelectWrap = styled.div`
  position: relative;
  width: 176px;

  svg {
    position: absolute;
    right: 8px;
    top: 6px;
  }
`;

const FilterSelect = styled.select`
  appearance: none;
  width: 100%;
  height: 20px;
  padding: 0 5px;
  background: #f8f8f8;
  border: 1px solid #bbb;
  color: #444;
  font-weight: 400;
`;

const UnusedRow = styled.label`
  display: flex;
  align-items: center;
  gap: 7px;
  height: 25px;
  padding-left: 9px;
  border-bottom: 1px solid #999;

  input {
    appearance: none;
    width: 13px;
    height: 13px;
    margin: 0;
    border: 1px solid #999;
    border-radius: 2px;
    background: #f4f4f4;
  }

  input:checked::before {
    content: "";
    display: block;
    height: 100%;
    background: #222;
    clip-path: polygon(10% 50%, 28% 38%, 42% 56%, 80% 6%, 96% 20%, 46% 92%);
  }
`;

const FieldList = styled.ul`
  list-style: none;

  li {
    display: flex;
    align-items: center;
    gap: 6px;
    height: 30px;
    padding-left: 6px;
    border-bottom: 1px solid #c3dcf5;
  }

  li:nth-child(6n) {
    height: 29px;
  }
`;

const Overlay = styled.div`
  position: absolute;
  inset: 0;
  z-index: 1;
  display: flex;
  align-items: flex-start;
  justify-content: center;
  padding: 266px 0 0 3px;
  background: rgba(130, 130, 130, 0.5);
`;

const Dialog = styled.div`
  width: 446px;
  background: #fff;
  box-shadow: 0 1px 8px 1px rgba(0, 0, 0, 0.75);
`;

const DialogBody = styled.div`
  padding: 13px 35px 24px;
`;

const DialogHead = styled.div`
  display: flex;
  align-items: center;
  justify-content: space-between;

  h1 {
    color: #333;
    font-size: 29px;
    font-weight: 300;
    line-height: 40px;
  }
`;

const CloseButton = styled.button`
  padding: 0 1px 3px 0;
`;

const DialogHint = styled.p`
  height: 77px;
  padding-top: 2px;
  color: #555;
  font-size: 13px;
`;

const DialogFields = styled.div`
  display: grid;
  grid-template-columns: 116px 252px;
  row-gap: 9px;
  padding: 8px 0 0 5px;
`;

const FieldLabel = styled.label`
  padding-top: 1px;
`;

const Required = styled.span`
  color: #f00;
  font-size: 15px;
`;

const NameWrap = styled.div`
  position: relative;
  height: 20px;
`;

const NameInput = styled.input`
  display: block;
  width: 100%;
  height: 20px;
  padding: 0 1px;
  background: #fff;
  border: 1px solid #ccc;
  color: #222;
`;

const NameMark = styled.span`
  ${mark}
  inset: -8px -7px -4px -6px;
`;

const DescriptionInput = styled.textarea`
  display: block;
  height: 94px;
  padding: 3px 1px;
  border: 1px solid #ccc;
  color: #222;
  resize: none;
`;

const DialogFooter = styled.div`
  display: flex;
  justify-content: flex-end;
  gap: 9px;
  padding: 12px 33px 10px 0;
  background: #f8f8f8;
`;

const OkWrap = styled.div`
  position: relative;
`;

const DialogButton = styled.button`
  width: 89px;
  height: 28px;
  background: #fff;
  border: ${({ $primary }) => ($primary ? "2px solid #7fb0f0" : "1px solid #c6c6c6")};
`;

const OkMark = styled.span`
  ${mark}
  inset: -10px -3px -6px -4px;
`;

export default App;
